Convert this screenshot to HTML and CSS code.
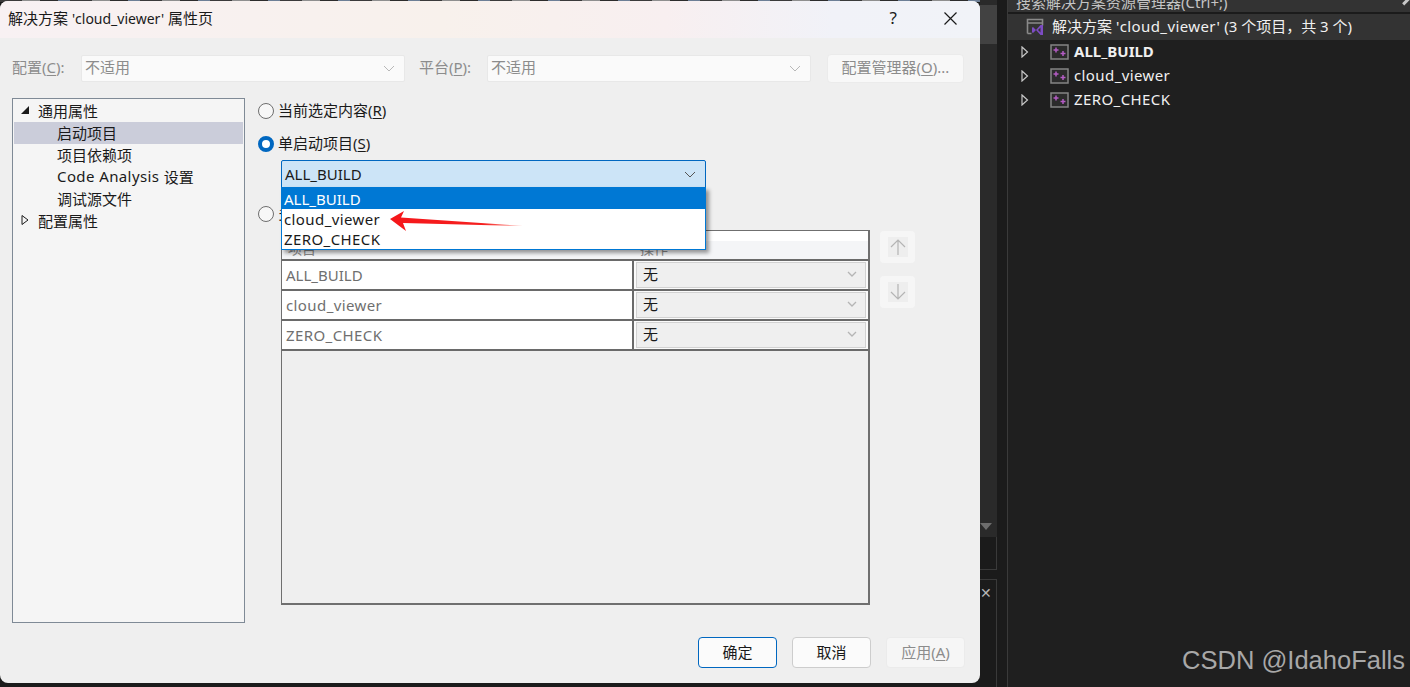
FILE: index.html
```html
<!DOCTYPE html>
<html lang="zh-CN">
<head>
    <meta charset="UTF-8">
    <title>解决方案 'cloud_viewer' 属性页</title>
    <link rel="stylesheet" href="styles.css">
</head>
<body>
    <div class="desktop">
        <!-- editor behind the dialog -->
        <div class="editor">
            <div class="top-strip"></div>
            <div class="scroll-col">
                <div class="scroll-thumb"></div>
                <div class="scroll-arrow"></div>
            </div>
            <div class="side-box"></div>
            <div class="side-box side-box-last"><span class="side-close">✕</span></div>
        </div>

        <!-- solution explorer -->
        <div class="explorer">
            <div class="search-box">
                <span class="search-text">搜索解决方案资源管理器(Ctrl+;)</span>
                <span class="search-pin"></span>
            </div>
            <div class="sln-row">
                <svg class="sln-icon" width="19" height="18" viewBox="0 0 19 18">
                    <path d="M1.5 15.5V1.5h15v6M1.5 5h15M1.5 15.5h4" fill="none" stroke="#8a8a8a" stroke-width="1.6"/>
                    <path d="M7 9l3 3 4.500-5H17v10h-2.500l-4.500-5-3 3-1-.8V9.800z" fill="#7d4cc4"/>
                    <path d="M14.500 9.500v5l-2.500-2.500z" fill="#333"/>
                </svg>
                <span class="row-text">解决方案 <span class="lt">'cloud_viewer'</span> (3 个项目，共 3 个)</span>
            </div>
            <div class="proj-row">
                <svg class="tree-arrow" width="8" height="12" viewBox="0 0 8 12"><path d="M1 1l5.500 5L1 11z" fill="none" stroke="#c8c8c8" stroke-width="1.200"/></svg>
                <svg class="proj-icon" width="19" height="16" viewBox="0 0 19 16"><rect x="1" y="1" width="17" height="14" fill="#2b2b2b" stroke="#858585" stroke-width="1.500"/><path d="M6 3.500v5M3.500 6h5M13 7v5M10.500 9.500h5" stroke="#b45cc4" stroke-width="1.500"/></svg>
                <b class="row-text">ALL_BUILD</b>
            </div>
            <div class="proj-row">
                <svg class="tree-arrow" width="8" height="12" viewBox="0 0 8 12"><path d="M1 1l5.500 5L1 11z" fill="none" stroke="#c8c8c8" stroke-width="1.200"/></svg>
                <svg class="proj-icon" width="19" height="16" viewBox="0 0 19 16"><rect x="1" y="1" width="17" height="14" fill="#2b2b2b" stroke="#858585" stroke-width="1.500"/><path d="M6 3.500v5M3.500 6h5M13 7v5M10.500 9.500h5" stroke="#b45cc4" stroke-width="1.500"/></svg>
                <span class="row-text lt">cloud_viewer</span>
            </div>
            <div class="proj-row">
                <svg class="tree-arrow" width="8" height="12" viewBox="0 0 8 12"><path d="M1 1l5.500 5L1 11z" fill="none" stroke="#c8c8c8" stroke-width="1.200"/></svg>
                <svg class="proj-icon" width="19" height="16" viewBox="0 0 19 16"><rect x="1" y="1" width="17" height="14" fill="#2b2b2b" stroke="#858585" stroke-width="1.500"/><path d="M6 3.500v5M3.500 6h5M13 7v5M10.500 9.500h5" stroke="#b45cc4" stroke-width="1.500"/></svg>
                <span class="row-text lt">ZERO_CHECK</span>
            </div>
        </div>

        <!-- property page dialog -->
        <div class="dialog">
            <div class="title-bar">
                <span class="title-text">解决方案 <span class="title-latin">'cloud_viewer'</span> 属性页</span>
                <span class="title-help">?</span>
                <svg class="title-close" width="13" height="13" viewBox="0 0 13 13"><path d="M.5.500l12 12M12.500.500l-12 12" stroke="#1a1a1a" stroke-width="1.200"/></svg>
            </div>

            <div class="config-row">
                <span class="config-label label-cfg">配置(<u>C</u>):</span>
                <div class="config-select select-cfg">
                    <span class="up-text">不适用</span>
                    <svg width="12" height="7" viewBox="0 0 12 7"><path d="M1 1l5 5 5-5" fill="none" stroke="#b8b8b8" stroke-width="1"/></svg>
                </div>
                <span class="config-label label-plat">平台(<u>P</u>):</span>
                <div class="config-select select-plat">
                    <span class="up-text">不适用</span>
                    <svg width="12" height="7" viewBox="0 0 12 7"><path d="M1 1l5 5 5-5" fill="none" stroke="#b8b8b8" stroke-width="1"/></svg>
                </div>
                <div class="config-btn">配置管理器(<u>O</u>)...</div>
            </div>

            <div class="main-row">
                <div class="tree-pane">
                    <div class="tree-row">
                        <svg class="tree-mark" width="10" height="10" viewBox="0 0 10 10"><path d="M9 1v8H1z" fill="#1a1a1a"/></svg>
                        <span>通用属性</span>
                    </div>
                    <div class="tree-row tree-sub tree-active">启动项目</div>
                    <div class="tree-row tree-sub">项目依赖项</div>
                    <div class="tree-row tree-sub"><span class="lt">Code Analysis&nbsp;</span>设置</div>
                    <div class="tree-row tree-sub">调试源文件</div>
                    <div class="tree-row">
                        <svg class="tree-mark" width="10" height="12" viewBox="0 0 10 12"><path d="M2 1.500l6 4.500-6 4.500z" fill="none" stroke="#1a1a1a" stroke-width="1"/></svg>
                        <span>配置属性</span>
                    </div>
                </div>

                <div class="start-pane">
                    <div class="radio-row">
                        <span class="radio"></span>
                        <span class="up-text">当前选定内容(<u>R</u>)</span>
                    </div>
                    <div class="radio-row radio-second">
                        <span class="radio radio-on"></span>
                        <span class="up-text">单启动项目(<u>S</u>)</span>
                    </div>
                    <div class="combo">
                        <div class="combo-box">
                            <span>ALL_BUILD</span>
                            <svg width="12" height="7" viewBox="0 0 12 7"><path d="M1 1l5 5 5-5" fill="none" stroke="#555" stroke-width="1"/></svg>
                        </div>
                        <div class="combo-list">
                            <div class="combo-item combo-item-on">ALL_BUILD</div>
                            <div class="combo-item lt">cloud_viewer</div>
                            <div class="combo-item lt">ZERO_CHECK</div>
                        </div>
                        <svg class="red-arrow" width="140" height="24" viewBox="0 0 140 24">
                            <defs>
                                <linearGradient id="arrowFade" x1="0" x2="1" y1="0" y2="0">
                                    <stop offset="0" stop-color="#f5161a"/>
                                    <stop offset="0.7" stop-color="#f5201f"/>
                                    <stop offset="1" stop-color="#ffb4ac"/>
                                </linearGradient>
                            </defs>
                            <path d="M1 8L15 0l-3 6.500L134 15 14 12l3 8z" fill="url(#arrowFade)"/>
                        </svg>
                    </div>
                    <div class="radio-row radio-third">
                        <span class="radio"></span>
                        <span class="up-text">多启动项目(<u>U</u>):</span>
                    </div>
                    <div class="multi-row">
                        <div class="proj-table">
                            <div class="table-head">
                                <span class="head-name">项目</span>
                                <span class="head-action">操作</span>
                            </div>
                            <div class="table-line">
                                <span class="cell-name">ALL_BUILD</span>
                                <div class="cell-action"><div class="cell-select"><span class="up-text">无</span><svg width="10" height="6" viewBox="0 0 10 6"><path d="M1 1l4 4 4-4" fill="none" stroke="#b5b5b5" stroke-width="1.300"/></svg></div></div>
                            </div>
                            <div class="table-line">
                                <span class="cell-name lt">cloud_viewer</span>
                                <div class="cell-action"><div class="cell-select"><span class="up-text">无</span><svg width="10" height="6" viewBox="0 0 10 6"><path d="M1 1l4 4 4-4" fill="none" stroke="#b5b5b5" stroke-width="1.300"/></svg></div></div>
                            </div>
                            <div class="table-line">
                                <span class="cell-name lt">ZERO_CHECK</span>
                                <div class="cell-action"><div class="cell-select"><span class="up-text">无</span><svg width="10" height="6" viewBox="0 0 10 6"><path d="M1 1l4 4 4-4" fill="none" stroke="#b5b5b5" stroke-width="1.300"/></svg></div></div>
                            </div>
                        </div>
                        <div class="move-btns">
                            <div class="move-btn">
                                <svg width="20" height="20" viewBox="0 0 20 20"><rect width="20" height="20" fill="#eeeeee"/><path d="M10 18V3M3 10l7-7 7 7" fill="none" stroke="#b4b4b4" stroke-width="1.200"/></svg>
                            </div>
                            <div class="move-btn">
                                <svg width="20" height="20" viewBox="0 0 20 20"><rect width="20" height="20" fill="#eeeeee"/><path d="M10 2v15M3 10l7 7 7-7" fill="none" stroke="#b4b4b4" stroke-width="1.200"/></svg>
                            </div>
                        </div>
                    </div>
                </div>
            </div>

            <div class="footer-row">
                <div class="dlg-btn dlg-btn-ok">确定</div>
                <div class="dlg-btn">取消</div>
                <div class="dlg-btn dlg-btn-off">应用(<u>A</u>)</div>
            </div>
        </div>

        <div class="watermark">CSDN @IdahoFalls</div>
    </div>
</body>
</html>
```

FILE: styles.css
```css
* {
    box-sizing: border-box;
}
html, body {
    margin: 0;
    height: 100%;
    overflow: hidden;
}
body {
    font-family: "Noto Sans", "Noto Sans CJK SC", sans-serif;
    font-size: 15px;
    background: #1b1b1b;
}
u {
    text-underline-offset: 2px;
}
.lt {
    letter-spacing: 0.4px;
}
.up-text {
    margin-bottom: 4px;
}
.desktop {
    position: relative;
    display: flex;
    width: 1410px;
    height: 687px;
    overflow: hidden;
}

/* editor behind */
.editor {
    position: relative;
    width: 1008px;
    padding-left: 980px;
    padding-right: 10px;
    background: #1b1b1b;
    border-right: 1px solid #3a3a3a;
}
.top-strip {
    position: absolute;
    top: 0;
    left: 0;
    width: 980px;
    height: 2px;
    background: repeating-linear-gradient(90deg, #3a3a3a 0 22px, #8f8f8f 22px 40px, #2c2c2c 40px 58px, #6d7f96 58px 70px);
}
.scroll-col {
    position: relative;
    height: 537px;
    padding-top: 5px;
    background: #2a2a2a;
}
.scroll-thumb {
    width: 17px;
    height: 39px;
    background: #424242;
}
.scroll-arrow {
    position: absolute;
    left: 0;
    bottom: 7px;
    border-left: 6px solid transparent;
    border-right: 6px solid transparent;
    border-top: 7px solid #6d6d6d;
}
.side-box {
    height: 33px;
    border: 1px solid #3a3a3a;
    border-left: 0;
    border-top: 0;
}
.side-box-last {
    height: 120px;
    margin-top: 9px;
    border-top: 1px solid #3a3a3a;
    border-bottom: 0;
}
.side-close {
    display: block;
    margin-top: 3px;
    font-size: 14px;
    line-height: 20px;
    color: #b5b5b5;
}

/* solution explorer */
.explorer {
    flex: 1;
    background: #1f1f1f;
    color: #f0f0f0;
}
.search-box {
    position: relative;
    height: 14px;
    padding-left: 8px;
    overflow: hidden;
    background: #333333;
    border-bottom: 2px solid #1b1b1b;
    color: #c4c4c4;
    line-height: 20px;
}
.search-text {
    display: block;
    margin-top: -8px;
}
.search-pin {
    position: absolute;
    right: 0;
    top: 0;
    width: 8px;
    height: 3px;
    background: #c8c8c8;
    transform: rotate(-45deg);
}
.sln-row {
    display: flex;
    align-items: center;
    height: 26px;
    padding-left: 18px;
    background: #333333;
    white-space: nowrap;
}
.sln-icon {
    margin-right: 7px;
}
.row-text {
    margin-bottom: 2px;
}
.sln-row .row-text {
    margin-bottom: 4px;
}
.proj-row {
    display: flex;
    align-items: center;
    height: 24px;
    padding-left: 13px;
}
.tree-arrow {
    margin-right: 21px;
}
.proj-icon {
    margin-right: 5px;
}

/* dialog */
.dialog {
    position: absolute;
    left: 0;
    top: 1px;
    width: 980px;
    height: 682px;
    background: #efefef;
    border-radius: 8px;
    color: #1a1a1a;
}
.title-bar {
    display: flex;
    align-items: center;
    height: 37px;
    padding-left: 8px;
    border-radius: 8px 8px 0 0;
    background: linear-gradient(90deg, #f8f1f3 0%, #f8f1ec 45%, #f8eff0 68%, #f1f2f8 85%, #f1f3f8 100%);
}
.title-text {
    flex: 1;
    margin-bottom: 4px;
    color: #1a1a1a;
}
.title-latin {
    font-size: 14px;
}
.title-help {
    margin: 0 47px 4px 0;
    font-size: 17px;
}
.title-close {
    margin: 0 23px 2px 0;
}

.config-row {
    display: flex;
    align-items: center;
    height: 30px;
    margin-top: 15px;
    padding-left: 12px;
    color: #8c8c8c;
}
.config-label {
    margin-bottom: 4px;
    white-space: nowrap;
}
.label-cfg {
    width: 69px;
}
.label-plat {
    width: 68px;
}
.config-select {
    display: flex;
    align-items: center;
    justify-content: space-between;
    width: 324px;
    height: 27px;
    padding: 0 9px 0 3px;
    background: #fafafa;
    border: 1px solid #e8e8e8;
    border-radius: 2px;
}
.select-cfg {
    margin-right: 14px;
}
.config-btn {
    width: 137px;
    height: 29px;
    margin-left: 16px;
    background: #f8f8f8;
    border: 1px solid #ebebeb;
    border-radius: 4px;
    text-align: center;
    line-height: 25px;
    white-space: nowrap;
}

.main-row {
    display: flex;
    height: 525px;
    margin-top: 15px;
    padding-left: 12px;
}
.tree-pane {
    width: 233px;
    padding: 1px 1px 0;
    background: #f5f5f5;
    border: 1px solid #7f8a96;
}
.tree-row {
    display: flex;
    align-items: center;
    height: 22px;
    padding: 0 0 2px 6px;
    white-space: nowrap;
}
.tree-mark {
    margin-right: 8px;
}
.tree-sub {
    padding-left: 43px;
}
.tree-active {
    background: #cbcdda;
}

.start-pane {
    position: relative;
    width: 672px;
    margin-left: 13px;
}
.radio-row {
    display: flex;
    align-items: center;
    height: 20px;
    margin-top: 3px;
    white-space: nowrap;
}
.radio-second {
    margin-top: 13px;
}
.radio-third {
    margin-top: 16px;
}
.radio {
    width: 16px;
    height: 16px;
    margin-right: 4px;
    background: #f7f7f7;
    border: 1px solid #6e6e6e;
    border-radius: 50%;
}
.radio-on {
    background: #fff;
    border: 4px solid #0067c0;
}

.combo {
    position: relative;
    z-index: 2;
    width: 425px;
    margin: 6px 0 0 23px;
}
.combo-box {
    display: flex;
    align-items: center;
    justify-content: space-between;
    height: 28px;
    padding: 0 9px 0 3px;
    background: #cce4f7;
    border: 1px solid #0067c0;
    border-radius: 2px 2px 0 0;
}
.combo-list {
    position: absolute;
    left: 0;
    top: 27px;
    width: 100%;
    height: 63px;
    background: #fff;
    border: 1px solid #0078d4;
    box-shadow: 3px 3px 4px rgba(0, 0, 0, 0.4);
}
.combo-item {
    height: 20px;
    padding-left: 2px;
    line-height: 20px;
}
.combo-item-on {
    height: 21px;
    background: #0078d4;
    color: #fff;
    line-height: 22px;
}
.red-arrow {
    position: absolute;
    left: 108px;
    top: 51px;
}

.multi-row {
    display: flex;
    margin: 6px 0 0 23px;
}
.proj-table {
    width: 589px;
    height: 375px;
    border: 1px solid #6f6f6f;
    border-bottom-width: 2px;
    border-right-width: 2px;
}
.table-head {
    display: grid;
    grid-template-columns: 352px 1fr;
    height: 28px;
    padding-top: 9px;
    background: linear-gradient(180deg, #fff 0 10px, #f4f5f7 10px);
    color: #8a8a8a;
    font-size: 14px;
    line-height: 18px;
    overflow: hidden;
}
.head-name {
    padding-left: 6px;
}
.head-action {
    padding-left: 6px;
}
.table-line {
    display: grid;
    grid-template-columns: 352px 1fr;
    height: 30px;
    border-top: 2px solid #6a6a6a;
}
.table-line:last-child {
    height: 32px;
    border-bottom: 2px solid #6a6a6a;
}
.cell-name {
    padding-left: 4px;
    background: #fff;
    border-right: 2px solid #6a6a6a;
    color: #6f6f6f;
    line-height: 28px;
}
.cell-action {
    padding: 1px 2px;
    background: #fbfbfb;
}
.cell-select {
    display: flex;
    align-items: center;
    justify-content: space-between;
    height: 26px;
    padding: 0 8px 0 6px;
    background: #efefef;
    border: 1px solid #d2d2d2;
}
.cell-select svg {
    margin-bottom: 3px;
}
.move-btns {
    display: flex;
    flex-direction: column;
    gap: 13px;
    margin: 1px 0 0 10px;
}
.move-btn {
    display: flex;
    align-items: center;
    justify-content: center;
    width: 35px;
    height: 32px;
    background: #f6f6f6;
    border-radius: 4px;
}

.footer-row {
    display: flex;
    justify-content: flex-end;
    gap: 15px;
    margin-top: 14px;
    padding-right: 15px;
}
.dlg-btn {
    width: 79px;
    height: 31px;
    background: #fbfbfb;
    border: 1px solid #cdcdcd;
    border-radius: 4px;
    text-align: center;
    line-height: 29px;
}
.dlg-btn-ok {
    border-color: #0067c0;
}
.dlg-btn-off {
    background: #f6f6f6;
    border-color: #ebebeb;
    color: #8c8c8c;
}

.watermark {
    position: absolute;
    right: 5px;
    bottom: 11px;
    font-family: "Liberation Sans", sans-serif;
    font-size: 25.5px;
    line-height: 32px;
    color: #a8a8a8;
}
```
